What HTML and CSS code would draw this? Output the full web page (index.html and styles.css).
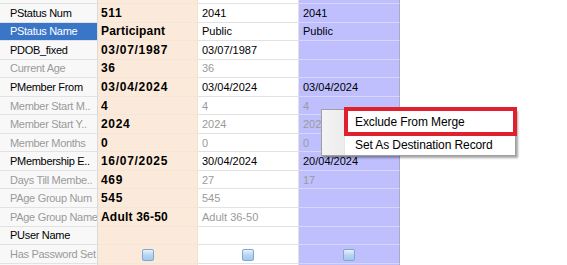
FILE: index.html
```html
<!DOCTYPE html>
<html>
<head>
<meta charset="utf-8">
<link rel="stylesheet" href="styles.css">
</head>
<body>
<div class="grid">
  <div class="c lbl top"></div><div class="c v1 top"></div><div class="c v2 top"></div><div class="c v3 top"></div>

  <div class="c lbl">PStatus Num</div><div class="c v1 b n">511</div><div class="c v2">2041</div><div class="c v3">2041</div>
  <div class="c lbl sel">PStatus Name</div><div class="c v1 b">Participant</div><div class="c v2">Public</div><div class="c v3">Public</div>
  <div class="c lbl">PDOB_fixed</div><div class="c v1 b n">03/07/1987</div><div class="c v2">03/07/1987</div><div class="c v3"></div>
  <div class="c lbl g">Current Age</div><div class="c v1 b n">36</div><div class="c v2 g">36</div><div class="c v3"></div>
  <div class="c lbl">PMember From</div><div class="c v1 b n">03/04/2024</div><div class="c v2">03/04/2024</div><div class="c v3">03/04/2024</div>
  <div class="c lbl g">Member Start M..</div><div class="c v1 b n">4</div><div class="c v2 g">4</div><div class="c v3 g">4</div>
  <div class="c lbl g">Member Start Y..</div><div class="c v1 b n">2024</div><div class="c v2 g">2024</div><div class="c v3 g">2024</div>
  <div class="c lbl g">Member Months</div><div class="c v1 b n">0</div><div class="c v2 g">0</div><div class="c v3 g">0</div>
  <div class="c lbl">PMembership E..</div><div class="c v1 b n">16/07/2025</div><div class="c v2">30/04/2024</div><div class="c v3">20/04/2024</div>
  <div class="c lbl g">Days Till Membe..</div><div class="c v1 b n">469</div><div class="c v2 g">27</div><div class="c v3 g">17</div>
  <div class="c lbl g">PAge Group Num</div><div class="c v1 b n">545</div><div class="c v2 g">545</div><div class="c v3"></div>
  <div class="c lbl g clip">PAge Group Name</div><div class="c v1 b">Adult 36-50</div><div class="c v2 g">Adult 36-50</div><div class="c v3"></div>
  <div class="c lbl">PUser Name</div><div class="c v1"></div><div class="c v2"></div><div class="c v3"></div>
  <div class="c lbl g clip">Has Password Set</div><div class="c v1 cb"><span class="box"></span></div><div class="c v2 cb"><span class="box"></span></div><div class="c v3 cb"><span class="box"></span></div>
  <div class="c lbl"></div><div class="c v1"></div><div class="c v2"></div><div class="c v3"></div>
</div>

<div class="menu">
  <div class="gutter"></div>
  <div class="items">
    <div class="item first">Exclude From Merge</div>
    <div class="item">Set As Destination Record</div>
  </div>
</div>
<div class="mark"></div>
</body>
</html>
```
FILE: styles.css
```css
html, body {
  margin: 0;
  padding: 0;
  background: #ffffff;
  overflow: hidden;
  width: 567px;
  height: 265px;
}
.grid {
  display: grid;
  grid-template-columns: 98px 100px 101px 101px;
  grid-template-rows: 4px repeat(15, 18.55px);
  font-family: "Liberation Sans", Arial, sans-serif;
  font-size: 11px;
  color: #000;
}
.c {
  box-sizing: border-box;
  border-right: 1px solid #e2e2e2;
  border-bottom: 1px solid #e2e2e2;
  white-space: nowrap;
  overflow: hidden;
  display: flex;
  align-items: center;
  padding-left: 4px;
}
.lbl {
  background: #f8f8f8;
  padding-left: 10px;
  letter-spacing: -0.3px;
  border-right-color: #dadada;
}
.lbl.clip { text-overflow: clip; }
.sel {
  background: #3a76c7;
  color: #fff;
}
.v1 {
  background: #fbead9;
  padding-left: 3px;
  border-right-color: #efe2d6;
  border-bottom-color: #f3e6da;
}
.v2 { background: #fff; }
.v3 {
  background: #bfbffd;
  border-right: 1px solid #a9a9c4;
  border-bottom-color: #d6d6fb;
}
.b {
  font-weight: bold;
  font-size: 12px;
  letter-spacing: 0.2px;
}
.b.n { letter-spacing: 0.7px; }
.g { color: #9a9a9a; }
.cb { justify-content: center; padding-left: 0; padding-top: 3px; }
.box {
  width: 10px;
  height: 10px;
  border: 1px solid #7ea7d3;
  border-radius: 2px;
  background: linear-gradient(#e8f2fc, #b4d3f2 55%, #a4c8ee);
}

.menu {
  position: absolute;
  left: 321px;
  top: 109px;
  width: 195px;
  height: 47px;
  box-sizing: border-box;
  border: 1px solid #a0a0a0;
  background: #fff;
  box-shadow: 2px 2px 2px rgba(0,0,0,0.35);
  display: flex;
  font-family: "Liberation Sans", Arial, sans-serif;
  font-size: 12px;
  color: #000;
}
.gutter {
  width: 22px;
  background: linear-gradient(90deg, #f4f4f4, #ececec);
  border-right: 1px solid #e6e6e6;
}
.items {
  flex: 1;
  display: flex;
  flex-direction: column;
}
.item {
  height: 21px;
  display: flex;
  align-items: center;
  padding-left: 10px;
  letter-spacing: -0.1px;
}
.item.first {
  height: 25px;
}
.mark {
  position: absolute;
  left: 344px;
  top: 107px;
  width: 173px;
  height: 29px;
  box-sizing: border-box;
  border: 4px solid #e0202c;
}
```
